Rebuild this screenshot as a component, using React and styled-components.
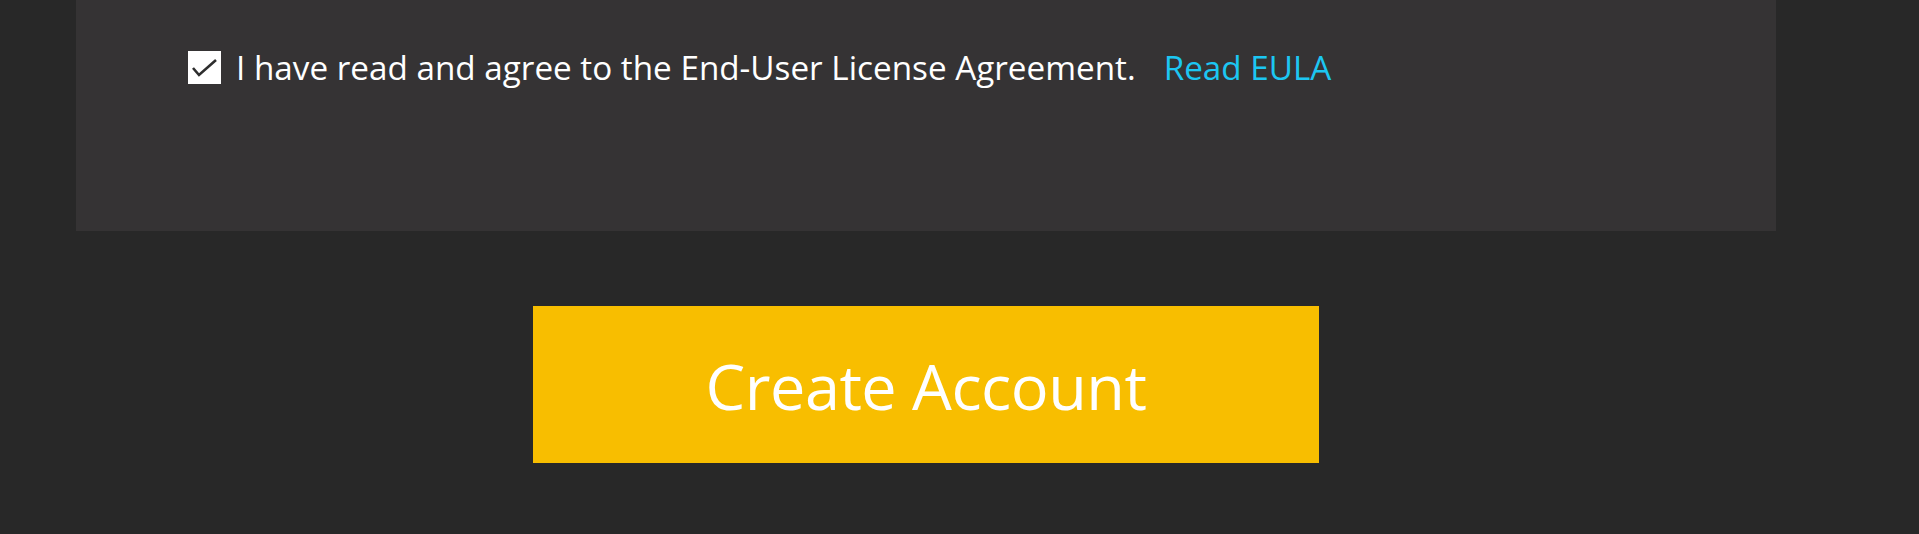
import React, { useState } from 'react';
import styled, { createGlobalStyle } from 'styled-components';

const GlobalStyle = createGlobalStyle`
  html, body {
    margin: 0;
    padding: 0;
    background: #282828;
    font-family: "Open Sans", "Noto Sans", sans-serif;
  }
`;

const Page = styled.div`
  width: 1919px;
  height: 534px;
  background: #282828;
  overflow: hidden;
`;

const Panel = styled.section`
  margin-left: 76px;
  width: 1700px;
  height: 231px;
  background: #353334;
  box-sizing: border-box;
  padding: 44px 0 0 112px;
`;

const AgreeRow = styled.label`
  display: flex;
  align-items: center;
  gap: 15px;
  color: #ffffff;
  font-size: 33.25px;
  cursor: pointer;
`;

const Box = styled.span`
  width: 33px;
  height: 33px;
  background: #ffffff;
  display: flex;
  align-items: center;
  justify-content: center;
  flex-shrink: 0;
`;

const EulaLink = styled.a`
  color: #1cc6f2;
  text-decoration: none;
  margin-left: 13px;
`;

const ButtonRow = styled.div`
  display: flex;
  justify-content: center;
  width: 1852px;
  padding-top: 75px;
`;

const CreateButton = styled.button`
  width: 786px;
  height: 157px;
  border: none;
  background: #f8be00;
  color: #ffffff;
  font-family: "Open Sans", "Noto Sans", sans-serif;
  font-size: 63px;
  letter-spacing: -0.5px;
  padding: 2px 0 0;
  cursor: pointer;
`;

export default function App() {
  const [agreed, setAgreed] = useState(true);

  return (
    <Page>
      <GlobalStyle />
      <Panel>
        <AgreeRow onClick={() => setAgreed(!agreed)}>
          <Box>
            {agreed && (
              <svg width="28" height="24" viewBox="0 0 28 24">
                <path d="M2 13 L8 20 L25 5" fill="none" stroke="#2e2e2e" strokeWidth="2.6" strokeLinejoin="miter" />
              </svg>
            )}
          </Box>
          <span>I have read and agree to the End-User License Agreement.</span>
          <EulaLink href="#" onClick={e => e.preventDefault()}>Read EULA</EulaLink>
        </AgreeRow>
      </Panel>
      <ButtonRow>
        <CreateButton>Create Account</CreateButton>
      </ButtonRow>
    </Page>
  );
}
